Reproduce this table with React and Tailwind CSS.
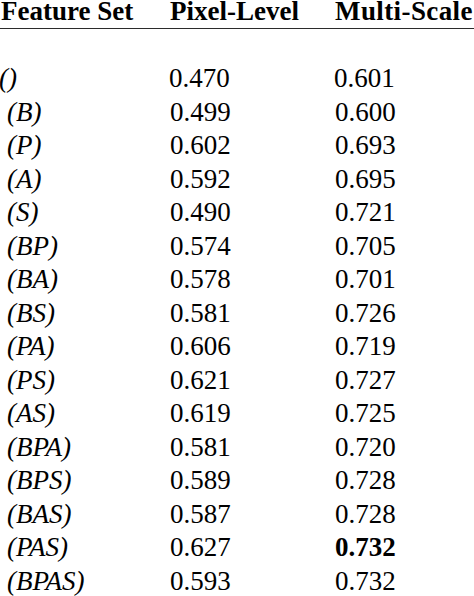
import React from "react";

const rows = [
  ["()", "0.470", "0.601"],
  ["(B)", "0.499", "0.600"],
  ["(P)", "0.602", "0.693"],
  ["(A)", "0.592", "0.695"],
  ["(S)", "0.490", "0.721"],
  ["(BP)", "0.574", "0.705"],
  ["(BA)", "0.578", "0.701"],
  ["(BS)", "0.581", "0.726"],
  ["(PA)", "0.606", "0.719"],
  ["(PS)", "0.621", "0.727"],
  ["(AS)", "0.619", "0.725"],
  ["(BPA)", "0.581", "0.720"],
  ["(BPS)", "0.589", "0.728"],
  ["(BAS)", "0.587", "0.728"],
  ["(PAS)", "0.627", "0.732", true],
  ["(BPAS)", "0.593", "0.732"],
];

export default function App() {
  return (
    <div
      className="w-[474px] h-[596px] overflow-hidden bg-white text-black text-[27px] whitespace-nowrap"
      style={{ fontFamily: '"Liberation Serif", "Times New Roman", serif' }}
    >
      <div className="flex font-bold leading-[22px] h-[29px] border-b border-[#2b2b2b]">
        <div className="w-[170px] pl-[1px]">Feature Set</div>
        <div className="w-[165px]">Pixel-Level</div>
        <div className="flex-1 tracking-[0.4px]">Multi-Scale</div>
      </div>
      <div className="pt-[33px]">
        {rows.map(([name, a, b, bold], i) => (
          <div key={name} className="flex leading-[33.5px] h-[33.5px]">
            <div className={"w-[170px] italic " + (i === 0 ? "pl-0 -ml-[1px]" : "pl-[7px]")}>{name}</div>
            <div className="w-[165px]">{a}</div>
            <div className={"flex-1 " + (bold ? "font-bold" : "")}>{b}</div>
          </div>
        ))}
      </div>
    </div>
  );
}
